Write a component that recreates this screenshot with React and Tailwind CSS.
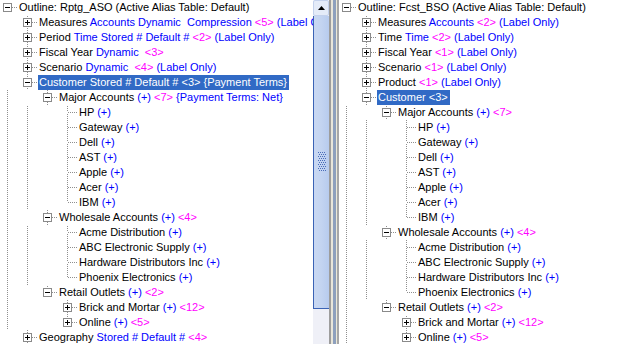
import React from 'react';

const colors = { k: 'text-black', b: 'text-[#0000ff]', m: 'text-[#ff00ff]' };
const LINE = '#8f8f8f';

const leaf = (name) => ({ parts: [[name + ' ', 'k'], ['(+)', 'b']] });

const customerKids = (majorExtra) => [
  {
    exp: 'minus',
    parts: [['Major Accounts ', 'k'], ['(+) ', 'b'], ['<7>', 'm'], ...(majorExtra ? [[majorExtra, 'b']] : [])],
    children: ['HP', 'Gateway', 'Dell', 'AST', 'Apple', 'Acer', 'IBM'].map(leaf),
  },
  {
    exp: 'minus',
    parts: [['Wholesale Accounts ', 'k'], ['(+) ', 'b'], ['<4>', 'm']],
    children: ['Acme Distribution', 'ABC Electronic Supply', 'Hardware Distributors Inc', 'Phoenix Electronics'].map(leaf),
  },
  {
    exp: 'minus',
    parts: [['Retail Outlets ', 'k'], ['(+) ', 'b'], ['<2>', 'm']],
    children: [
      { exp: 'plus', parts: [['Brick and Mortar ', 'k'], ['(+) ', 'b'], ['<12>', 'm']] },
      { exp: 'plus', parts: [['Online ', 'k'], ['(+) ', 'b'], ['<5>', 'm']] },
    ],
  },
];

const leftTree = [
  {
    exp: 'minus',
    parts: [['Outline: Rptg_ASO (Active Alias Table: Default)', 'k']],
    children: [
      { exp: 'plus', parts: [['Measures ', 'k'], ['Accounts Dynamic  Compression ', 'b'], ['<5>', 'm'], [' (Label Only)', 'b']] },
      { exp: 'plus', parts: [['Period ', 'k'], ['Time Stored # Default # ', 'b'], ['<2>', 'm'], [' (Label Only)', 'b']] },
      { exp: 'plus', parts: [['Fiscal Year ', 'k'], ['Dynamic  ', 'b'], ['<3>', 'm']] },
      { exp: 'plus', parts: [['Scenario ', 'k'], ['Dynamic  ', 'b'], ['<4>', 'm'], [' (Label Only)', 'b']] },
      {
        exp: 'minus',
        selected: true,
        parts: [['Customer Stored # Default # <3> {Payment Terms}', 'k']],
        children: customerKids(' {Payment Terms: Net}'),
      },
      { exp: 'plus', cont: true, parts: [['Geography ', 'k'], ['Stored # Default # ', 'b'], ['<4>', 'm']] },
    ],
  },
];

const rightTree = [
  {
    exp: 'minus',
    parts: [['Outline: Fcst_BSO (Active Alias Table: Default)', 'k']],
    children: [
      { exp: 'plus', parts: [['Measures ', 'k'], ['Accounts ', 'b'], ['<2>', 'm'], [' (Label Only)', 'b']] },
      { exp: 'plus', parts: [['Time ', 'k'], ['Time ', 'b'], ['<2>', 'm'], [' (Label Only)', 'b']] },
      { exp: 'plus', parts: [['Fiscal Year ', 'k'], ['<1>', 'm'], [' (Label Only)', 'b']] },
      { exp: 'plus', parts: [['Scenario ', 'k'], ['<1>', 'm'], [' (Label Only)', 'b']] },
      { exp: 'plus', parts: [['Product ', 'k'], ['<1>', 'm'], [' (Label Only)', 'b']] },
      {
        exp: 'minus',
        selected: true,
        cont: true,
        parts: [['Customer <3>', 'k']],
        children: customerKids(null),
      },
    ],
  },
];

function flatten(nodes, depth = 0, guides = [], out = []) {
  nodes.forEach((n, i) => {
    const hasNext = i < nodes.length - 1 || !!n.cont;
    out.push({ node: n, depth, guides, hasNext });
    if (n.children) flatten(n.children, depth + 1, [...guides, hasNext], out);
  });
  return out;
}

function Guide({ on, odd }) {
  return (
    <svg width="20" height="15" className="block shrink-0">
      {on && (
        <line x1="7.5" y1="0" x2="7.5" y2="15" stroke={LINE} strokeDasharray="1 1" strokeDashoffset={odd ? 1 : 0} shapeRendering="crispEdges" />
      )}
    </svg>
  );
}

function Own({ depth, hasNext, exp, odd }) {
  const off = odd ? 1 : 0;
  return (
    <svg width="18" height="15" className="block shrink-0">
      {depth > 0 && (
        <line x1="7.5" y1="0" x2="7.5" y2="7" stroke={LINE} strokeDasharray="1 1" strokeDashoffset={off} shapeRendering="crispEdges" />
      )}
      {hasNext && (
        <line x1="7.5" y1="8" x2="7.5" y2="15" stroke={LINE} strokeDasharray="1 1" strokeDashoffset={off} shapeRendering="crispEdges" />
      )}
      <line x1={exp ? 12 : 8} y1="7.5" x2="18" y2="7.5" stroke={LINE} strokeDasharray="1 1" shapeRendering="crispEdges" />
      {exp && (
        <g shapeRendering="crispEdges">
          <rect x="3.5" y="3.5" width="8" height="8" fill="#fff" stroke="#8a8a8a" />
          <line x1="5" y1="7.5" x2="10" y2="7.5" stroke="#000" />
          {exp === 'plus' && <line x1="7.5" y1="5" x2="7.5" y2="10" stroke="#000" />}
        </g>
      )}
    </svg>
  );
}

function Tree({ data }) {
  const rows = flatten(data);
  return (
    <div className="flex flex-col">
      {rows.map((r, idx) => (
        <div key={idx} className="flex h-[15px] items-center whitespace-pre">
          {r.guides.slice(1).map((g, j) => (
            <Guide key={j} on={g} odd={idx % 2 === 1} />
          ))}
          {r.depth > 0 && <Guide on={false} />}
          <Own depth={r.depth} hasNext={r.hasNext && r.depth > 0} exp={r.node.exp} odd={idx % 2 === 1} />
          {r.node.selected ? (
            <span className="bg-[#316ac5] text-white pl-px pr-[2px] leading-[15px]">
              {r.node.parts.map((p) => p[0]).join('')}
            </span>
          ) : (
            <span className="pl-px leading-[15px]">
              {r.node.parts.map((p, j) => (
                <span key={j} className={colors[p[1]]}>{p[0]}</span>
              ))}
            </span>
          )}
        </div>
      ))}
    </div>
  );
}

export default function App() {
  return (
    <div className="w-[620px] h-[344px] flex overflow-hidden bg-white text-[11px] font-['Liberation_Sans',Arial,sans-serif]">
      {/* left pane */}
      <div className="w-[313px] shrink-0 overflow-hidden bg-white">
        <Tree data={leftTree} />
      </div>

      {/* scrollbar */}
      <div className="w-[16px] shrink-0 flex flex-col bg-[#eef0f8]">
        <div className="h-[16px] flex items-center justify-center bg-[#e4ebf8] border border-[#c3d1ec] rounded-[2px]">
          <svg width="7" height="4">
            <polygon points="3.5,0 7,4 0,4" fill="#000" />
          </svg>
        </div>
        <div className="h-[293px] flex items-center justify-center border-l border-b border-[#3b63b5] bg-gradient-to-r from-[#c9d8f2] via-[#c3d4f1] to-[#b7cbee]">
          <svg width="8" height="20">
            {[0, 1, 2, 3, 4, 5, 6, 7, 8, 9].map((y) =>
              [0, 1, 2, 3].map((x) => (
                <rect key={y + '-' + x} x={x * 2 + (y % 2)} y={y * 2} width="1" height="1" fill="#4a6cb8" />
              ))
            )}
          </svg>
        </div>
        <div className="flex-1 bg-[#eff0f7]" />
      </div>

      {/* splitter */}
      <div className="w-[10px] shrink-0 flex">
        <div className="w-[2px] bg-[#9d9d9d]" />
        <div className="w-[2px] bg-[#e9e6da]" />
        <div className="w-[3px] bg-[#8ea0bd]" />
        <div className="w-[1px] bg-[#ece9d8]" />
        <div className="w-[2px] bg-[#a7a7a7]" />
      </div>

      {/* right pane */}
      <div className="flex-1 overflow-hidden bg-white">
        <Tree data={rightTree} />
      </div>
    </div>
  );
}
